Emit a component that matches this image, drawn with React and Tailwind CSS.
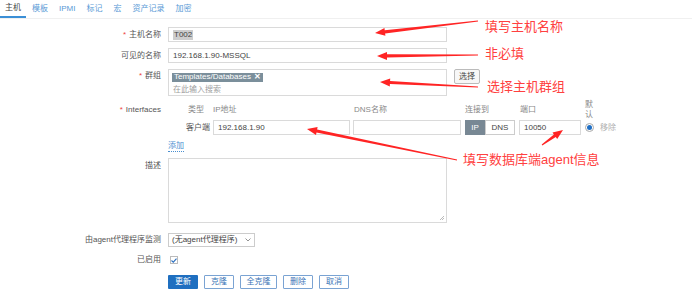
const tabs = ["主机", "模板", "IPMI", "标记", "宏", "资产记录", "加密"];

const Arrow = ({ x1, y1, x2, y2 }) => {
  const dx = x2 - x1;
  const dy = y2 - y1;
  const len = Math.sqrt(dx * dx + dy * dy);
  const ux = dx / len;
  const uy = dy / len;
  const nx = -uy;
  const ny = ux;
  const head = 10;
  const bx = x2 - ux * head;
  const by = y2 - uy * head;
  const p = (x, y) => `${x.toFixed(1)},${y.toFixed(1)}`;
  const pts = [
    p(x1 + nx * 0.5, y1 + ny * 0.5),
    p(bx + nx * 1.6, by + ny * 1.6),
    p(bx + nx * 4, by + ny * 4),
    p(x2, y2),
    p(bx - nx * 4, by - ny * 4),
    p(bx - nx * 1.6, by - ny * 1.6),
    p(x1 - nx * 0.5, y1 - ny * 0.5),
  ].join(" ");
  return <polygon points={pts} fill="#ff2424" />;
};

const Label = ({ children, req }) => (
  <div className="w-[162px] shrink-0 text-right text-[#555] pr-[1px]">
    {req && <span className="text-[#e44] mr-[3px]">*</span>}
    {children}
  </div>
);

const Input = ({ value, className }) => (
  <div
    className={
      "h-[15px] border border-[#dadada] bg-white flex items-center px-[4px] text-[#444] " +
      className
    }
  >
    {value}
  </div>
);

export default function App() {
  return (
    <div
      className="relative w-[692px] h-[298px] bg-white overflow-hidden text-[8px] leading-[10px]"
      style={{ fontFamily: '"Liberation Sans", "Noto Sans CJK SC", sans-serif' }}
    >
      {/* tabs */}
      <div className="flex gap-[1px] h-[19px] border-b border-[#f0f0f0]">
        {tabs.map((t, i) => (
          <div
            key={t}
            className={
              "px-[5px] h-[18px] flex items-center " +
              (i === 0
                ? "text-[#444] border-b-2 border-[#3b8fd6]"
                : "text-[#5a9ad6]")
            }
          >
            {t}
          </div>
        ))}
      </div>

      <div className="flex flex-col">
        <div className="flex items-center gap-[6px] mt-[8px]">
          <Label req>主机名称</Label>
          <Input
            className="w-[279px]"
            value={<span className="bg-[#cdcdcd] px-[1px]">T002</span>}
          />
        </div>

        <div className="flex items-center gap-[6px] mt-[6px]">
          <Label>可见的名称</Label>
          <Input className="w-[279px]" value="192.168.1.90-MSSQL" />
        </div>

        <div className="flex items-start gap-[6px] mt-[6px]">
          <div className="pt-[2px]">
            <Label req>群组</Label>
          </div>
          <div className="w-[279px] h-[27px] border border-[#dadada] px-[3px] pt-[2px]">
            <div className="inline-flex items-center h-[9px] bg-[#7b8f9b] text-white px-[2px] gap-[3px]">
              Templates/Databases
              <span className="font-bold text-[8px]">✕</span>
            </div>
            <div className="text-[#a0a0a0] mt-[3px] pl-[1px]">在此输入搜索</div>
          </div>
          <div className="ml-[1px] h-[15px] px-[4px] border border-[#bbb] rounded-[2px] bg-[#f7f7f7] flex items-center text-[#444]">
            选择
          </div>
        </div>

        {/* interfaces */}
        <div className="flex items-start gap-[6px] mt-[4px]">
          <div className="h-[20px] flex items-center">
            <Label req>Interfaces</Label>
          </div>
          <div className="flex flex-col">
            <div className="flex h-[20px] items-center text-[#888]">
              <div className="w-[45px] pl-[20px]">类型</div>
              <div className="w-[140px]">IP地址</div>
              <div className="w-[112px] pl-[1px]">DNS名称</div>
              <div className="w-[54px]">连接到</div>
              <div className="w-[66px] pl-[1px]">端口</div>
              <div className="w-[9px] leading-[10px]">默认</div>
            </div>
            <div className="flex h-[15px] items-center">
              <div className="w-[45px] text-right pr-[3px] text-[#555]">客户端</div>
              <Input className="w-[137px]" value="192.168.1.90" />
              <Input className="w-[108px] ml-[3px]" value="" />
              <div className="flex ml-[4px] h-[15px]">
                <div className="w-[20px] bg-[#788894] text-white flex items-center justify-center">
                  IP
                </div>
                <div className="w-[30px] border border-[#ccc] flex items-center justify-center text-[#444]">
                  DNS
                </div>
              </div>
              <Input className="w-[62px] ml-[4px]" value="10050" />
              <div className="ml-[4px] w-[9px] h-[9px] rounded-full border border-[#aaa] flex items-center justify-center">
                <div className="w-[5px] h-[5px] rounded-full bg-[#1f6fc5]" />
              </div>
              <div className="ml-[6px] text-[#b0b0b0]">移除</div>
            </div>
          </div>
        </div>

        <div className="flex items-center gap-[6px] mt-[6px] h-[11px]">
          <div className="w-[162px]" />
          <span className="text-[#4a8fd0] border-b border-dotted border-[#4a8fd0]">添加</span>
        </div>

        <div className="flex items-start gap-[6px] mt-[6px]">
          <div className="pt-[3px]">
            <Label>描述</Label>
          </div>
          <div className="relative w-[279px] h-[65px] border border-[#dadada]">
            <svg className="absolute right-[1px] bottom-[1px]" width="6" height="6">
              <path d="M1 5 L5 1 M3 5 L5 3" stroke="#aaa" strokeWidth="0.8" />
            </svg>
          </div>
        </div>

        <div className="flex items-center gap-[6px] mt-[10px]">
          <Label>由agent代理程序监测</Label>
          <div className="w-[87px] h-[14px] border border-[#ccc] flex items-center justify-between px-[3px] text-[#444]">
            (无agent代理程序)
            <svg width="6" height="4">
              <path d="M0.5 0.5 L3 3 L5.5 0.5" stroke="#777" fill="none" strokeWidth="0.8" />
            </svg>
          </div>
        </div>

        <div className="flex items-center gap-[6px] mt-[8px] h-[10px]">
          <Label>已启用</Label>
          <div className="ml-[2px] w-[8px] h-[8px] border border-[#bbb] flex items-center justify-center">
            <svg width="6" height="5">
              <path d="M0.5 2.5 L2.3 4.2 L5.5 0.6" stroke="#2a6fc0" fill="none" strokeWidth="1.1" />
            </svg>
          </div>
        </div>

        <div className="flex items-center gap-[6px] mt-[10px]">
          <div className="w-[162px]" />
          <div className="flex gap-[6px]">
            <div className="w-[30px] h-[14px] bg-[#1f6fc0] text-white flex items-center justify-center rounded-[1px]">
              更新
            </div>
            {["克隆", "全克隆", "删除", "取消"].map((b, i) => (
              <div
                key={b}
                className={
                  "h-[14px] border border-[#7aa3d3] text-[#3a74b6] flex items-center justify-center rounded-[1px] " +
                  (i === 1 ? "w-[37px]" : "w-[30px]")
                }
              >
                {b}
              </div>
            ))}
          </div>
        </div>
      </div>

      {/* annotations */}
      <svg className="absolute inset-0 pointer-events-none" width="692" height="298">
        <Arrow x1={478} y1={21} x2={375} y2={33} />
        <Arrow x1={478} y1={55} x2={377} y2={56} />
        <Arrow x1={478} y1={87} x2={380} y2={82} />
        <Arrow x1={457} y1={160} x2={307} y2={129} />
        <Arrow x1={542} y1={145} x2={563} y2={130} />
      </svg>
      <div className="absolute left-[485px] top-[18px] text-[13px] leading-[17px] text-[#ff4040]">
        填写主机名称
      </div>
      <div className="absolute left-[485px] top-[45px] text-[13px] leading-[17px] text-[#ff4040]">
        非必填
      </div>
      <div className="absolute left-[487px] top-[78px] text-[13px] leading-[17px] text-[#ff4040]">
        选择主机群组
      </div>
      <div className="absolute left-[463px] top-[151px] text-[13px] leading-[17px] text-[#ff4040]">
        填写数据库端agent信息
      </div>
    </div>
  );
}
